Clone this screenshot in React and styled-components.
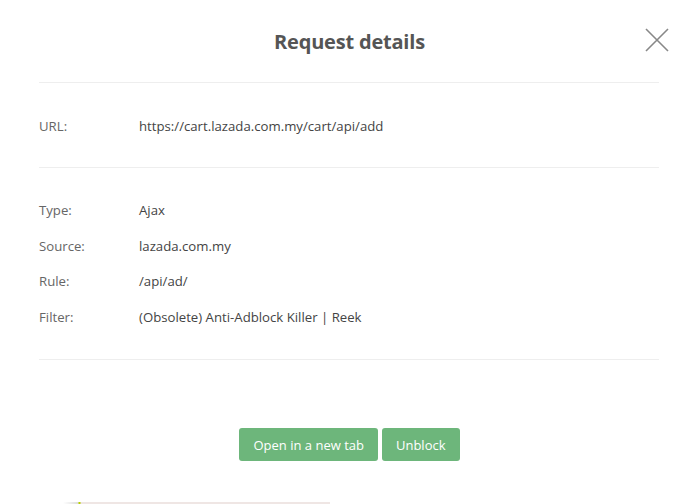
import React from "react";
import styled, { createGlobalStyle } from "styled-components";

const GlobalStyle = createGlobalStyle`
  html, body {
    margin: 0;
    padding: 0;
    background: #ffffff;
  }
  body {
    font-family: "Open Sans", "Noto Sans", "Liberation Sans", sans-serif;
  }
`;

const Page = styled.div`
  width: 699px;
  height: 504px;
  overflow: hidden;
  display: flex;
  flex-direction: column;
  background: #ffffff;
`;

const Header = styled.div`
  position: relative;
  height: 82px;
  display: flex;
  align-items: center;
  justify-content: center;
`;

const Title = styled.h1`
  margin: 0;
  font-size: 20px;
  font-weight: 700;
  color: #555555;
  letter-spacing: -0.2px;
`;

const CloseButton = styled.button`
  position: absolute;
  top: 27px;
  right: 29px;
  width: 26px;
  height: 26px;
  padding: 0;
  border: none;
  background: transparent;
  cursor: pointer;
  display: flex;
`;

const Divider = styled.hr`
  margin: 0 40px 0 39px;
  border: none;
  border-top: 1px solid #eeeeee;
`;

const Section = styled.div`
  display: flex;
  flex-direction: column;
  gap: 17.7px;
  padding: ${(p) => p.$pad};
`;

const Row = styled.div`
  display: flex;
  align-items: center;
  height: 18px;
  padding-left: 39px;
  font-size: 13.2px;
`;

const Label = styled.span`
  width: 100px;
  color: #666666;
`;

const Value = styled.span`
  color: #444444;
`;

const Actions = styled.div`
  display: flex;
  justify-content: center;
  gap: 4px;
  margin-top: 68px;
`;

const Button = styled.button`
  height: 33px;
  padding: 0 14px;
  border: none;
  border-radius: 3px;
  background: #6db67b;
  color: #ffffff;
  font-family: inherit;
  font-size: 13px;
  cursor: pointer;
`;

const Peek = styled.div`
  margin: auto 0 0 63px;
  width: 267px;
  height: 2px;
  background: linear-gradient(
    to right,
    #ffffff 0px,
    #dddddd 15px,
    #b8d000 16px,
    #b8d000 17px,
    #efe6e4 18px
  );
`;

const details = [
  ["Type:", "Ajax"],
  ["Source:", "lazada.com.my"],
  ["Rule:", "/api/ad/"],
  ["Filter:", "(Obsolete) Anti-Adblock Killer | Reek"],
];

export default function App() {
  return (
    <Page>
      <GlobalStyle />
      <Header>
        <Title>Request details</Title>
        <CloseButton aria-label="Close">
          <svg width="26" height="26" viewBox="0 0 26 26">
            <path
              d="M2 2 L24 24 M24 2 L2 24"
              stroke="#888888"
              strokeWidth="1.6"
              fill="none"
            />
          </svg>
        </CloseButton>
      </Header>
      <Divider />
      <Section $pad="34px 0 32px">
        <Row>
          <Label>URL:</Label>
          <Value>https://cart.lazada.com.my/cart/api/add</Value>
        </Row>
      </Section>
      <Divider />
      <Section $pad="33px 0 33px">
        {details.map(([label, value]) => (
          <Row key={label}>
            <Label>{label}</Label>
            <Value>{value}</Value>
          </Row>
        ))}
      </Section>
      <Divider />
      <Actions>
        <Button>Open in a new tab</Button>
        <Button>Unblock</Button>
      </Actions>
      <Peek />
    </Page>
  );
}
